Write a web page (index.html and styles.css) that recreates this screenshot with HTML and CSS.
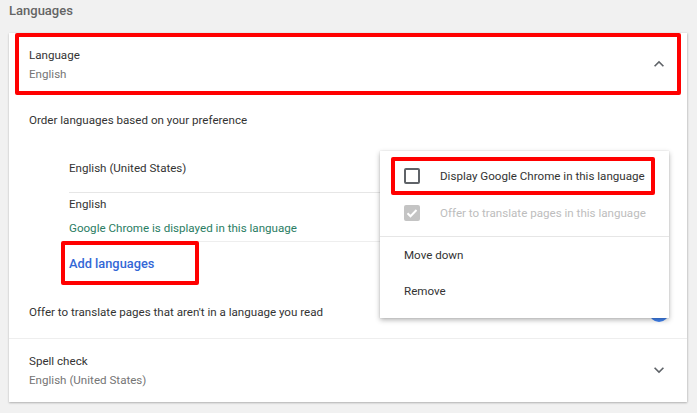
FILE: index.html
```html
<!DOCTYPE html>
<html lang="en">
<head>
<meta charset="utf-8">
<title>Languages</title>
<link rel="stylesheet" href="styles.css">
</head>
<body>
<div class="page-title">Languages</div>
<div class="card">
  <div class="lang-header">
    <div class="two-line">
      <div class="primary">Language</div>
      <div class="secondary">English</div>
    </div>
    <svg class="chevron" viewBox="0 0 24 24" width="20" height="20"><path d="M12 8l-6 6 1.41 1.41L12 10.83l4.59 4.58L18 14z" fill="#5f6368"/></svg>
  </div>
  <div class="order-label">Order languages based on your preference</div>
  <div class="lang-list">
    <div class="lang-row single">English (United States)</div>
    <div class="lang-row double">
      <div class="l1">English</div>
      <div class="l2 green">Google Chrome is displayed in this language</div>
    </div>
    <div class="add-btn">Add languages</div>
  </div>
  <div class="translate-row">
    <span>Offer to translate pages that aren't in a language you read</span>
    <div class="toggle"><div class="knob"></div></div>
  </div>
  <div class="spell-row">
    <div class="two-line">
      <div class="primary">Spell check</div>
      <div class="secondary">English (United States)</div>
    </div>
    <svg class="chevron" viewBox="0 0 24 24" width="20" height="20"><path d="M16.59 8.59L12 13.17 7.41 8.59 6 10l6 6 6-6z" fill="#5f6368"/></svg>
  </div>

  <div class="menu">
    <div class="menu-check highlight">
      <span class="box"></span>
      <span>Display Google Chrome in this language</span>
    </div>
    <div class="menu-check disabled">
      <span class="box checked"><svg viewBox="0 0 16 16" width="16" height="16"><path d="M3.5 8.2l3 3 6-6.2" stroke="#fff" stroke-width="2" fill="none"/></svg></span>
      <span>Offer to translate pages in this language</span>
    </div>
    <div class="menu-sep"></div>
    <div class="menu-item">Move down</div>
    <div class="menu-item">Remove</div>
  </div>
</div>
</body>
</html>
```
FILE: styles.css
```css
html, body {
  margin: 0;
  padding: 0;
}
body {
  background: #f1f1f1;
  font-family: Roboto, "Liberation Sans", sans-serif;
  font-size: 11.6px;
  color: #333;
  width: 697px;
  height: 413px;
  overflow: hidden;
  white-space: nowrap;
}
.page-title {
  height: 33px;
  line-height: 22px;
  padding-left: 9px;
  color: #646464;
  font-size: 13px;
  font-weight: 500;
}
.card {
  position: relative;
  margin-left: 9px;
  width: 678px;
  height: 369px;
  background: #fff;
  box-shadow: 0 1px 2px rgba(0,0,0,0.25), 1px 0 2px rgba(0,0,0,0.08);
}
.lang-header {
  margin: 0 6px;
  height: 54px;
  border: 4px solid #f00;
  border-radius: 2px;
  display: flex;
  align-items: center;
  justify-content: space-between;
  padding: 0 8px 0 10px;
}
.two-line .primary {
  line-height: 20px;
  color: #333;
}
.two-line .secondary {
  line-height: 19px;
  color: #757575;
}
.order-label {
  padding-left: 20px;
  margin-top: 15px;
  line-height: 20px;
}
.lang-list {
  margin-top: 13px;
  padding: 0 20px 0 60px;
}
.lang-row.single {
  height: 49px;
  line-height: 50px;
  border-bottom: 1px solid #e6e6e6;
}
.lang-row.double {
  height: 48px;
  border-bottom: 1px solid #eeeeee;
}
.l1 {
  line-height: 23px;
}
.l2 {
  line-height: 24px;
}
.green {
  color: #2a7d63;
}
.add-btn {
  display: inline-block;
  margin-left: -8px;
  margin-top: -1px;
  width: 122px;
  height: 27px;
  border: 4px solid #f00;
  border-radius: 2px;
  padding: 9px 4px 0 4px;
  line-height: 20px;
  color: #3367d6;
  font-weight: 500;
  font-size: 12.8px;
  vertical-align: top;
}
.translate-row {
  height: 53px;
  border-bottom: 1px solid #eeeeee;
  padding: 0 20px;
  display: flex;
  align-items: center;
  justify-content: space-between;
}
.toggle {
  position: relative;
  width: 30px;
  height: 12px;
  border-radius: 6px;
  background: #a8c5f4;
  margin-right: 0;
}
.knob {
  position: absolute;
  right: -2px;
  top: -4px;
  width: 20px;
  height: 20px;
  border-radius: 50%;
  background: #4285f4;
}
.spell-row {
  height: 62px;
  display: flex;
  align-items: center;
  justify-content: space-between;
  padding: 0 18px 0 20px;
}
.chevron {
  display: block;
}
.menu {
  position: absolute;
  left: 371px;
  top: 118px;
  width: 289px;
  height: 167px;
  box-sizing: border-box;
  background: #fff;
  box-shadow: 0 2px 5px rgba(0,0,0,0.3), 0 0 1px rgba(0,0,0,0.15);
  padding-top: 6px;
}
.menu-check {
  display: flex;
  align-items: center;
  height: 36px;
  padding-left: 24px;
  gap: 20px;
}
.menu-check.highlight {
  margin: 0 14px 0 11px;
  height: 30px;
  border: 4px solid #f00;
  border-radius: 2px;
  padding-left: 9px;
}
.box {
  width: 12px;
  height: 12px;
  border: 2px solid #5f6368;
  border-radius: 2px;
  flex: none;
  position: relative;
}
.box.checked {
  background: #c4c4c4;
  border-color: #c4c4c4;
}
.box.checked svg {
  position: absolute;
  left: -2px;
  top: -2px;
}
.menu-check.disabled {
  color: #bdbdbd;
}
.menu-sep {
  margin-top: 5px;
  border-top: 1px solid #e6e6e6;
}
.menu-item {
  height: 36px;
  line-height: 36px;
  padding-left: 24px;
}
```
